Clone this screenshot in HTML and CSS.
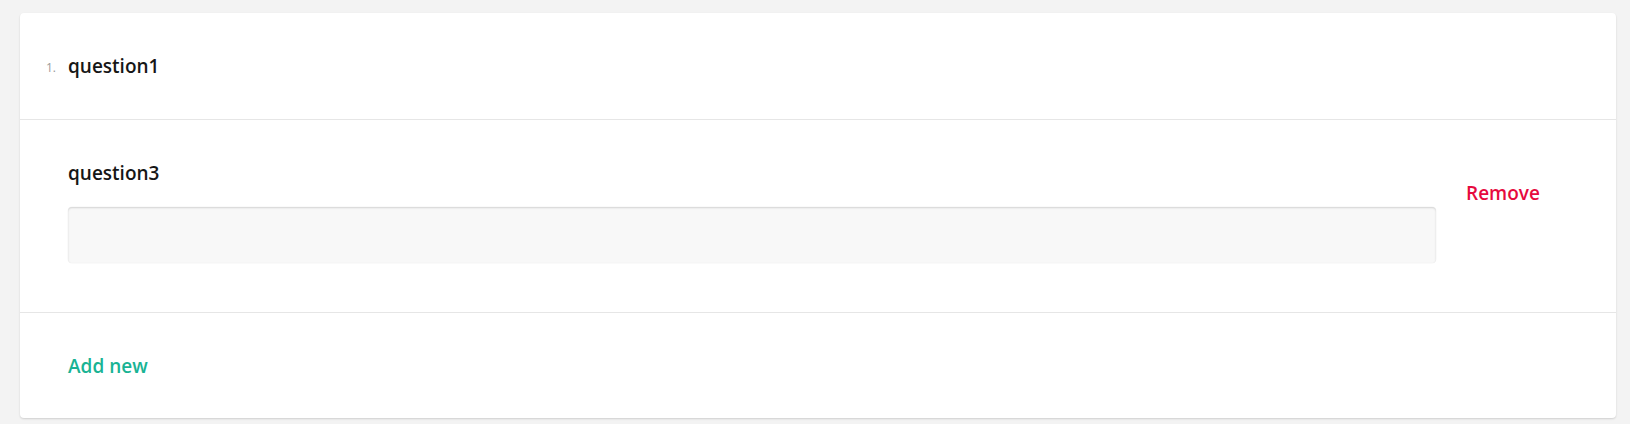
FILE: index.html
```html
<!DOCTYPE html>
<html>
<head>
<meta charset="utf-8">
<link rel="stylesheet" href="styles.css">
</head>
<body>
<div class="card">
  <div class="header">
    <span class="num">1.</span>
    <span class="title">question1</span>
  </div>
  <div class="row">
    <div class="field">
      <div class="label">question3</div>
      <div class="input"></div>
    </div>
    <div class="remove">Remove</div>
  </div>
  <div class="footer">
    <span class="add">Add new</span>
  </div>
</div>
</body>
</html>
```
FILE: styles.css
```css
html, body {
  margin: 0;
  padding: 0;
}
body {
  background: #f3f3f3;
  font-family: "Open Sans", sans-serif;
  color: #161616;
  padding: 13px 14px 6px 20px;
}
.card {
  background: #fff;
  border-radius: 4px;
  box-shadow: 0 1px 2px rgba(0,0,0,0.15);
  height: 405px;
  display: flex;
  flex-direction: column;
}
.header {
  height: 107px;
  display: flex;
  align-items: center;
  padding-left: 26px;
  border-bottom: 1px solid #e6e6e6;
  box-sizing: border-box;
}
.num {
  font-size: 12px;
  color: #9b9b9b;
  width: 22px;
  padding-top: 3px;
}
.title {
  font-size: 19px;
  font-weight: 600;
  line-height: 26px;
}
.row {
  height: 193px;
  box-sizing: border-box;
  border-bottom: 1px solid #e6e6e6;
  display: flex;
  padding: 40px 0 0 48px;
}
.field {
  width: 1368px;
}
.label {
  font-size: 19px;
  font-weight: 600;
  line-height: 26px;
}
.input {
  margin-top: 21px;
  height: 56px;
  background: #f8f8f8;
  border-radius: 4px;
  box-shadow: inset 0 1px 2px rgba(0,0,0,0.15), 0 0 0 0.5px rgba(0,0,0,0.04);
}
.remove {
  margin-left: 30px;
  margin-top: 20px;
  font-size: 19px;
  font-weight: 600;
  color: #e60a3e;
  line-height: 26px;
}
.footer {
  flex: 1;
  display: flex;
  align-items: center;
  padding-left: 48px;
}
.add {
  font-size: 19px;
  font-weight: 600;
  color: #19b394;
}
```
